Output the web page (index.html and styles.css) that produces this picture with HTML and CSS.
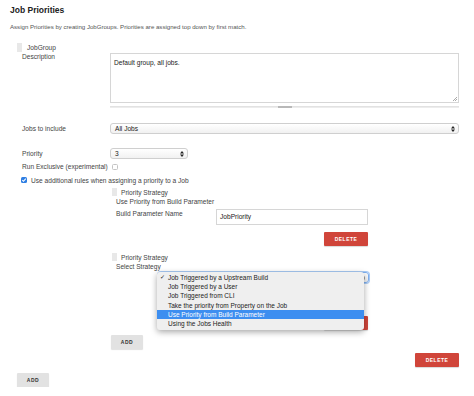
FILE: index.html
```html
<!DOCTYPE html>
<html lang="en">
<head>
    <title>Job Priorities</title>
    <link rel="stylesheet" href="styles.css">
</head>
<body>
    <div class="page">
        <h1 class="title">Job Priorities</h1>
        <p class="intro">Assign Priorities by creating JobGroups. Priorities are assigned top down by first match.</p>

        <div class="group">
            <div class="head"><span class="handle"></span>JobGroup</div>

            <div class="row row-top desc-row">
                <label class="lbl">Description</label>
                <div class="textarea">Default group, all jobs.<span class="grip"></span></div>
            </div>
            <div class="preview-bar"><span class="thumb"></span></div>

            <div class="row jobs-row">
                <label class="lbl">Jobs to include</label>
                <div class="select wide">All Jobs<span class="arrows"><svg width="4" height="6" viewBox="0 0 4 6"><path d="M0 2.4 L2 0 L4 2.4 Z M0 3.6 L2 6 L4 3.6 Z" fill="#222"/></svg></span></div>
            </div>

            <div class="row prio-row">
                <label class="lbl">Priority</label>
                <div class="select short">3<span class="arrows"><svg width="4" height="6" viewBox="0 0 4 6"><path d="M0 2.4 L2 0 L4 2.4 Z M0 3.6 L2 6 L4 3.6 Z" fill="#222"/></svg></span></div>
            </div>

            <div class="row excl-row">
                <label class="lbl">Run Exclusive (experimental)</label>
                <span class="checkbox"></span>
            </div>

            <div class="check-row">
                <span class="checkbox checked"><svg width="6" height="6" viewBox="0 0 6 6"><path d="M1.3 3.1 L2.5 4.3 L4.8 1.6" fill="none" stroke="#fff" stroke-width="1.1"/></svg></span>
                Use additional rules when assigning a priority to a Job
            </div>

            <div class="strategies">
                <div class="strategy">
                    <div class="head"><span class="handle"></span>Priority Strategy</div>
                    <div class="sub-title">Use Priority from Build Parameter</div>
                    <div class="row row-top param-row">
                        <label class="lbl sub-lbl">Build Parameter Name</label>
                        <div class="input">JobPriority</div>
                    </div>
                    <div class="actions"><button class="btn delete">DELETE</button></div>
                </div>

                <div class="strategy second">
                    <div class="head"><span class="handle"></span>Priority Strategy</div>
                    <div class="sub-title">Select Strategy</div>
                    <div class="select strat focus"><span class="arrows"><svg width="4" height="6" viewBox="0 0 4 6"><path d="M0 2.4 L2 0 L4 2.4 Z M0 3.6 L2 6 L4 3.6 Z" fill="#222"/></svg></span></div>
                    <div class="actions hidden-del"><button class="btn delete">DELETE</button></div>

                    <ul class="menu">
                        <li><span class="tick">&#10003;</span>Job Triggered by a Upstream Build</li>
                        <li>Job Triggered by a User</li>
                        <li>Job Triggered from CLI</li>
                        <li>Take the priority from Property on the Job</li>
                        <li class="active">Use Priority from Build Parameter</li>
                        <li>Using the Jobs Health</li>
                    </ul>
                </div>

                <button class="btn add inner-add">ADD</button>
            </div>

            <div class="actions group-del"><button class="btn delete">DELETE</button></div>
        </div>

        <button class="btn add outer-add">ADD</button>
    </div>
</body>
</html>
```

FILE: styles.css
```css
/* General styling */
body {
    margin: 0;
    padding: 0;
    background-color: white;
    font-family: "Liberation Sans", Arial, sans-serif;
    color: #3a3a3a;
}

.page {
    padding: 4px 0 0 10px;
    width: 449px;
}

.title {
    margin: 0;
    font-size: 8.5px;
    line-height: 12px;
    font-weight: bold;
    color: #222;
}

.intro {
    margin: 7px 0 0 0;
    font-size: 6.1px;
    line-height: 8px;
    color: #555;
}

/* Job group */
.group {
    margin: 12px 0 0 7px;
    width: 442px;
}

.head {
    display: flex;
    align-items: center;
    height: 9px;
    font-size: 6.6px;
    color: #444;
}

.handle {
    display: inline-block;
    width: 5px;
    height: 9px;
    margin-right: 5px;
    background-color: #e8e8e8;
}

.row {
    display: flex;
    align-items: center;
}

.row-top {
    align-items: flex-start;
}

.lbl {
    flex: 0 0 93px;
    padding-left: 5px;
    box-sizing: border-box;
    font-size: 6.6px;
    line-height: 8px;
    white-space: nowrap;
    color: #444;
}

.desc-row {
    margin-top: 1px;
}

.textarea {
    position: relative;
    flex: 1;
    height: 50px;
    box-sizing: border-box;
    border: 1px solid #d6d6d6;
    padding: 5px 3px;
    font-size: 6.6px;
    line-height: 8px;
    color: #222;
}

.grip {
    position: absolute;
    right: 1px;
    bottom: 1px;
    width: 4px;
    height: 4px;
    background: linear-gradient(135deg, transparent 45%, #aaa 45%, #aaa 55%, transparent 55%, transparent 70%, #aaa 70%, #aaa 80%, transparent 80%);
}

.preview-bar {
    position: relative;
    margin: 3px 0 0 93px;
    height: 2px;
    border-top: 1px solid #e2e2e2;
    border-bottom: 1px solid #ececec;
    box-sizing: border-box;
}

.thumb {
    position: absolute;
    left: 168px;
    top: -1px;
    width: 14px;
    height: 2px;
    background-color: #b8b8b8;
}

/* Select boxes */
.select {
    position: relative;
    height: 11px;
    box-sizing: border-box;
    border: 1px solid #cfcfcf;
    border-radius: 3px;
    background: linear-gradient(#ffffff, #f1f1f1);
    padding-left: 4px;
    font-size: 6.6px;
    line-height: 9px;
    color: #222;
}

.select.wide {
    flex: 1;
}

.select.short {
    width: 78px;
}

.arrows {
    position: absolute;
    right: 3px;
    top: 1.5px;
    line-height: 0;
}

.jobs-row {
    margin-top: 15px;
}

.prio-row {
    margin-top: 14px;
}

.excl-row {
    margin-top: 4px;
    height: 8px;
}

.checkbox {
    display: inline-block;
    width: 6px;
    height: 6px;
    box-sizing: border-box;
    border: 1px solid #c4c4c4;
    border-radius: 1.5px;
    margin-left: 2px;
    background-color: white;
    line-height: 0;
}

.checkbox.checked {
    border: none;
    background-color: #2f7fe3;
    margin: 0 4px 0 4px;
}

.check-row {
    display: flex;
    align-items: center;
    height: 8px;
    margin-top: 5px;
    font-size: 6.6px;
    color: #444;
}

/* Nested strategies */
.strategies {
    margin-left: 95px;
    width: 256px;
}

.strategy {
    position: relative;
}

.strategy .head {
    height: 8px;
    margin-top: 4px;
}

.strategy .handle {
    height: 8px;
    margin-right: 4px;
}

.strategy.second .head {
    margin-top: 7px;
}

.sub-title {
    margin: 2px 0 0 4px;
    font-size: 6.6px;
    line-height: 8px;
    color: #444;
}

.param-row {
    margin-top: 3px;
}

.sub-lbl {
    flex: 0 0 104px;
    padding-left: 4px;
    margin-top: 1px;
}

.input {
    flex: 1;
    height: 16px;
    box-sizing: border-box;
    border: 1px solid #d6d6d6;
    padding-left: 3px;
    font-size: 6.6px;
    line-height: 14px;
    color: #222;
}

.actions {
    display: flex;
    justify-content: flex-end;
    margin-top: 7px;
}

.strat {
    margin: 1px -1px 0 46px;
}

.strat.focus {
    border-color: #7fb0f0;
    box-shadow: 0 0 0 1px #a9cbf6;
}

.hidden-del {
    margin-top: 33px;
}

.menu {
    position: absolute;
    left: 45px;
    top: 19px;
    width: 207px;
    margin: 0;
    padding: 1px 0 2px 0;
    list-style: none;
    background-color: #efefef;
    border-radius: 3px;
    box-shadow: 0 2px 6px rgba(0, 0, 0, 0.35);
    z-index: 10;
}

.menu li {
    position: relative;
    height: 9.2px;
    line-height: 9.2px;
    padding-left: 11px;
    font-size: 6.5px;
    color: #222;
}

.menu li.active {
    background-color: #3d8ef0;
    color: white;
}

.tick {
    position: absolute;
    left: 3px;
    font-size: 6px;
}

/* Buttons */
.btn {
    display: block;
    height: 14px;
    border: none;
    border-radius: 1px;
    padding: 0;
    font-family: "Liberation Sans", Arial, sans-serif;
    font-size: 5px;
    font-weight: bold;
    letter-spacing: 0.5px;
    cursor: pointer;
}

.delete {
    width: 44px;
    background-color: #d0453a;
    color: white;
    box-shadow: 0 1px 1px rgba(0, 0, 0, 0.15);
}

.add {
    width: 32px;
    background-color: #e2e2e2;
    color: #333;
    box-shadow: 0 1px 1px rgba(0, 0, 0, 0.12);
}

.inner-add {
    margin: 5px 0 0 -1px;
}

.group-del {
    margin-top: 4px;
}

.outer-add {
    margin: 6px 0 0 7px;
}
```
